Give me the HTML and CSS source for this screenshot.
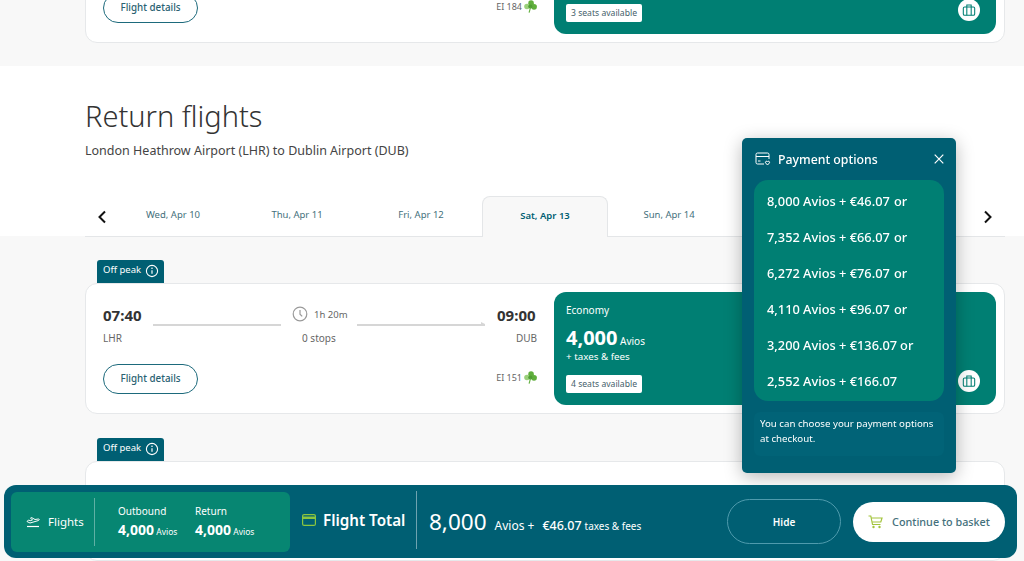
FILE: index.html

```html
<!DOCTYPE html>
<html lang="en">
<head>
  <meta charset="UTF-8" />
  <meta name="viewport" content="width=device-width, initial-scale=1.0"/>
  <title>Return flights</title>
  <link rel="stylesheet" href="styles.css">
</head>
<body>
  <svg class="sprites" width="0" height="0" aria-hidden="true">
    <symbol id="shamrock" viewBox="0 0 14 14">
      <circle cx="7.600" cy="3.400" r="3" fill="#5fae3c"/>
      <circle cx="3.200" cy="7" r="3" fill="#9ad07c"/>
      <circle cx="10.800" cy="7.400" r="3.100" fill="#5fae3c"/>
      <circle cx="6.800" cy="7" r="2.200" fill="#4f9e34"/>
      <path d="M7 8 L5.500 13.500" stroke="#5fae3c" stroke-width="1.200" fill="none"/>
    </symbol>
    <symbol id="bag" viewBox="0 0 16 16">
      <g fill="none" stroke="#007f73" stroke-width="1.200">
        <rect x="1.500" y="4.500" width="13" height="9.500" rx="1.500"/>
        <path d="M5.500 4.500V2.200h5v2.300M5.500 4.500V14M10.500 4.500V14"/>
      </g>
    </symbol>
    <symbol id="info" viewBox="0 0 14 14">
      <circle cx="7" cy="7" r="5.600" fill="none" stroke="#fff" stroke-width="1.100"/>
      <path d="M7 6.200v3.600" stroke="#fff" stroke-width="1.200"/>
      <circle cx="7" cy="4.200" r=".8" fill="#fff"/>
    </symbol>
  </svg>

  <section class="prev-section">
    <div class="card">
      <div class="card-left">
        <div class="details-row">
          <button class="btn-details">Flight details</button>
          <span class="flight-no">EI 184 <svg class="shamrock"><use href="#shamrock"/></svg></span>
        </div>
      </div>
      <div class="fare">
        <div class="fare-foot">
          <span class="seats">3 seats available</span>
          <span class="bag"><svg width="14" height="14"><use href="#bag"/></svg></span>
        </div>
      </div>
    </div>
  </section>

  <section class="heading">
    <h1>Return flights</h1>
    <p>London Heathrow Airport (LHR) to Dublin Airport (DUB)</p>
    <nav class="dates">
      <span class="arrow"><svg width="10" height="14" viewBox="0 0 10 14"><path d="M8 1.500 2.500 7 8 12.500" fill="none" stroke="#111" stroke-width="2"/></svg></span>
      <a class="date">Wed, Apr 10</a>
      <a class="date">Thu, Apr 11</a>
      <a class="date">Fri, Apr 12</a>
      <a class="date active">Sat, Apr 13</a>
      <a class="date">Sun, Apr 14</a>
      <span class="arrow"><svg width="10" height="14" viewBox="0 0 10 14"><path d="M2 1.500 7.500 7 2 12.500" fill="none" stroke="#111" stroke-width="2"/></svg></span>
    </nav>
  </section>

  <section class="results">
    <div class="peak">Off peak <svg width="14" height="14"><use href="#info"/></svg></div>
    <div class="card">
      <div class="card-left">
        <div class="leg">
          <strong class="time">07:40</strong>
          <span class="line"></span>
          <span class="duration">
            <svg width="16" height="16" viewBox="0 0 16 16"><g fill="none" stroke="#9a9a9a" stroke-width="1.200"><circle cx="8" cy="8" r="6.800"/><path d="M8 4v4.200l2.200 2.200"/></g></svg>
            1h 20m
          </span>
          <span class="line line-arrow"></span>
          <strong class="time">09:00</strong>
        </div>
        <div class="airports">
          <span>LHR</span>
          <span>0 stops</span>
          <span>DUB</span>
        </div>
        <div class="details-row">
          <button class="btn-details">Flight details</button>
          <span class="flight-no">EI 151 <svg class="shamrock"><use href="#shamrock"/></svg></span>
        </div>
      </div>
      <div class="fare">
        <div class="fare-name">Economy</div>
        <div class="fare-price"><b>4,000</b> Avios</div>
        <div class="fare-tax">+ taxes &amp; fees</div>
        <div class="fare-foot">
          <span class="seats">4 seats available</span>
          <span class="bag"><svg width="14" height="14"><use href="#bag"/></svg></span>
        </div>
      </div>
    </div>

    <div class="peak peak-next">Off peak <svg width="14" height="14"><use href="#info"/></svg></div>
    <div class="card card-cut">
      <div class="card-left"></div>
      <div class="fare fare-off"></div>
    </div>
  </section>

  <aside class="popup">
    <header class="popup-head">
      <svg width="16" height="14" viewBox="0 0 16 14"><g fill="none" stroke="#fff" stroke-width="1"><path d="M9 12H2.500A1.500 1.500 0 0 1 1 10.500V2.500A1.500 1.500 0 0 1 2.500 1h10A1.500 1.500 0 0 1 14 2.500V7"/><path d="M1 4.500h13M3 9h2.500"/><path d="M12.500 13 10.500 10.800a1.100 1.100 0 0 1 2-1 1.100 1.100 0 0 1 2 1z"/></g></svg>
      <span class="popup-title">Payment options</span>
      <svg class="popup-close" width="10" height="10" viewBox="0 0 10 10"><path d="M.7.7l8.600 8.600M9.300.7.700 9.300" stroke="#fff" stroke-width="1.200"/></svg>
    </header>
    <ul class="options">
      <li><span>8,000 Avios + €46.07</span> or</li>
      <li><span>7,352 Avios + €66.07</span> or</li>
      <li><span>6,272 Avios + €76.07</span> or</li>
      <li><span>4,110 Avios + €96.07</span> or</li>
      <li><span>3,200 Avios + €136.07</span> or</li>
      <li><span>2,552 Avios + €166.07</span></li>
    </ul>
    <p class="popup-note">You can choose your payment options at checkout.</p>
  </aside>

  <footer class="bar">
    <div class="bar-flights">
      <div class="bar-label">
        <svg width="14" height="13" viewBox="0 0 14 13"><g fill="none" stroke="#fff" stroke-width="1"><path d="M1 6.500 4 8l8.500-2.500c1.200-.5 1-1.500-.2-1.500L9 4.500 5.500 2.500 4.500 3l2 2-2.300.7L2.500 5z"/></g><path d="M1 11.500h12" stroke="#fff" stroke-width="1.200"/></svg>
        Flights
      </div>
      <div class="bar-leg">
        <span>Outbound</span>
        <span class="bar-avios"><b>4,000</b> Avios</span>
      </div>
      <div class="bar-leg">
        <span>Return</span>
        <span class="bar-avios"><b>4,000</b> Avios</span>
      </div>
    </div>
    <div class="bar-total">
      <svg width="14" height="12" viewBox="0 0 14 12"><rect x=".6" y=".6" width="12.800" height="10.800" rx="1.500" fill="none" stroke="#8cc63f" stroke-width="1.200"/><rect x="1" y="2.500" width="12" height="2.500" fill="#8cc63f"/></svg>
      Flight Total
    </div>
    <div class="bar-sum">
      <span class="bar-big">8,000</span>
      <span class="bar-mid">Avios +</span>
      <span class="bar-eur">€46.07</span>
      <span class="bar-small">taxes &amp; fees</span>
    </div>
    <button class="btn-hide">Hide</button>
    <button class="btn-basket">
      <svg width="15" height="14" viewBox="0 0 15 14"><g fill="none" stroke="#a3c43c" stroke-width="1.200"><path d="M.5 1h2.300l1.700 8.500h8"/><path d="M3.300 3h10.700l-1.200 4H4.100"/></g><circle cx="5.500" cy="12" r="1.200" fill="#a3c43c"/><circle cx="11.500" cy="12" r="1.200" fill="#a3c43c"/></svg>
      Continue to basket
    </button>
  </footer>
</body>
</html>
```

FILE: styles.css

```css
* {
  box-sizing: border-box;
}
body {
  margin: 0;
  height: 561px;
  overflow: hidden;
  background: #f8f8f8;
  font-family: 'Noto Sans', sans-serif;
  color: #333;
}
.sprites {
  display: block;
}
button {
  font-family: inherit;
  cursor: pointer;
}

/* previous section, scrolled mostly off the top */
.prev-section {
  height: 66px;
  padding: 0 19px 23px 85px;
  display: flex;
  flex-direction: column;
  justify-content: flex-end;
  overflow: hidden;
}
.prev-section .card {
  flex: none;
}

/* heading + date tabs */
.heading {
  background: #fff;
  height: 170px;
  padding: 32px 19px 0 85px;
}
h1 {
  margin: 0;
  font-size: 29px;
  line-height: 36px;
  font-weight: 300;
  color: #333;
}
.heading p {
  margin: 8px 0 0;
  font-size: 12.500px;
  line-height: 18px;
  color: #444;
}
.dates {
  display: flex;
  margin-top: 36px;
  height: 41px;
  border-bottom: 1px solid #e4e6e8;
}
.arrow {
  width: 26px;
  display: flex;
  align-items: center;
  justify-content: center;
  padding: 2px 0 0 8px;
  flex: none;
}
.date {
  width: 124px;
  flex: none;
  display: flex;
  align-items: center;
  justify-content: center;
  font-size: 9.500px;
  color: #44707c;
  padding-bottom: 4px;
}
.date.active {
  height: 41px;
  width: 126px;
  margin: 0 -1px;
  background: #f8f8f8;
  border: 1px solid #e4e6e8;
  border-bottom: none;
  border-radius: 8px 8px 0 0;
  font-weight: 600;
  color: #005f73;
  padding-bottom: 3px;
}
.dates .arrow:last-child {
  margin-left: auto;
  margin-right: 8px;
}

/* flight cards */
.results {
  padding: 24px 19px 0 85px;
}
.peak {
  margin-left: 12px;
  width: 67px;
  height: 23px;
  display: flex;
  align-items: center;
  gap: 4px;
  padding: 0 0 4px 6px;
  background: #005f73;
  border-radius: 3px 3px 0 0;
  color: #fff;
  font-size: 9.500px;
  white-space: nowrap;
}
.peak svg {
  margin-top: 3px;
}
.peak-next {
  margin-top: 24px;
}
.card {
  display: flex;
  justify-content: space-between;
  height: 131px;
  padding: 8px 8px 8px 17px;
  background: #fff;
  border: 1px solid #e6e8ea;
  border-radius: 12px;
}
.card-left {
  width: 434px;
  display: flex;
  flex-direction: column;
  justify-content: flex-end;
}
.fare {
  width: 442px;
  height: 113px;
  flex: none;
  align-self: flex-end;
  padding: 10px 16px 12px 12px;
  background: #007f73;
  border-radius: 12px;
  color: #fff;
  display: flex;
  flex-direction: column;
}
.fare-off {
  height: 60px;
  background: #f3f3f3;
  border: 1px solid #e6e8ea;
  border-radius: 4px;
}
.card-cut {
  height: 100px;
}
.leg {
  display: flex;
  align-items: center;
  height: 20px;
}
.time {
  font-size: 15px;
  font-weight: 700;
  width: 40px;
  flex: none;
}
.line {
  height: 1.500px;
  background: #d6d6d6;
  width: 128px;
  margin: 0 0 0 10px;
  position: relative;
  top: 10px;
}
.line-arrow {
  margin: 0 12px 0 0;
}
.line-arrow::after {
  content: "";
  position: absolute;
  right: 0;
  top: -2px;
  border-left: 4px solid #d6d6d6;
  border-top: 2.500px solid transparent;
  border-bottom: 2.500px solid transparent;
}
.duration {
  width: 76px;
  flex: none;
  display: flex;
  align-items: center;
  gap: 6px;
  font-size: 9.500px;
  color: #666;
  padding-left: 11px;
  margin-top: -2px;
  white-space: nowrap;
}
.airports {
  display: flex;
  justify-content: space-between;
  margin-top: 6px;
  font-size: 10px;
  line-height: 14px;
  color: #666;
}
.details-row {
  display: flex;
  justify-content: space-between;
  align-items: center;
  margin-top: 19px;
  margin-bottom: 11px;
}
.btn-details {
  width: 95px;
  height: 30px;
  padding: 0 0 2px;
  background: #fff;
  border: 1px solid #1d6a7c;
  border-radius: 15px;
  color: #2a6272;
  font-size: 9.800px;
  font-weight: 500;
}
.flight-no {
  display: flex;
  align-items: center;
  gap: 2px;
  font-size: 9px;
  color: #666;
  margin-top: -3px;
}
.shamrock {
  width: 13px;
  height: 13px;
}
.fare-name {
  font-size: 10px;
  line-height: 16px;
}
.fare-price {
  margin-top: 8px;
  font-size: 10px;
  line-height: 24px;
}
.fare-price b {
  font-size: 20px;
  font-weight: 700;
}
.fare-tax {
  font-size: 9.800px;
  line-height: 12px;
  margin-top: -2px;
}
.fare-foot {
  margin-top: auto;
  display: flex;
  justify-content: space-between;
  align-items: flex-end;
}
.seats {
  background: #fff;
  color: #44606a;
  font-size: 8.600px;
  line-height: 18px;
  height: 18px;
  padding: 0 5px;
  border-radius: 2px;
}
.bag {
  width: 22px;
  height: 22px;
  border-radius: 50%;
  background: #fff;
  display: flex;
  align-items: center;
  justify-content: center;
  margin-bottom: 1px;
}

/* payment popup */
.popup {
  position: fixed;
  left: 742px;
  top: 138px;
  width: 214px;
  height: 335px;
  padding: 0 12px;
  background: #005f73;
  border-radius: 5px;
  box-shadow: 0 4px 18px rgba(0, 0, 0, 0.28);
  color: #fff;
}
.popup-head {
  height: 42px;
  display: flex;
  align-items: center;
  gap: 7px;
  padding: 0 0 0 1px;
}
.popup-title {
  font-size: 12.300px;
  font-weight: 500;
}
.popup-close {
  margin-left: auto;
}
.options {
  list-style: none;
  margin: 0;
  padding: 3px 13px 2px;
  background: #007f73;
  border-radius: 14px;
}
.options li {
  display: flex;
  height: 36px;
  align-items: center;
  font-size: 12.800px;
  font-weight: 500;
}
.options span {
  min-width: 124px;
  margin-right: 3px;
  flex: none;
  white-space: nowrap;
}
.popup-note {
  margin: 11px 0 0;
  padding: 4px 4px 4px 6px;
  height: 44px;
  background: #016377;
  border-radius: 6px;
  font-size: 9.700px;
  line-height: 15px;
}

/* sticky basket bar */
.bar {
  position: fixed;
  left: 4px;
  top: 485px;
  width: 1013px;
  height: 73px;
  padding: 7px 12px 7px 7px;
  display: flex;
  align-items: center;
  background: #005f73;
  border-radius: 12px;
  color: #fff;
}
.bar-flights {
  width: 279px;
  height: 60px;
  flex: none;
  display: flex;
  align-items: center;
  background: #078672;
  border-radius: 6px;
}
.bar-label {
  width: 84px;
  height: 48px;
  display: flex;
  align-items: center;
  gap: 8px;
  padding-left: 15px;
  border-right: 1px solid #5fb0a4;
  font-size: 11.500px;
}
.bar-leg {
  display: flex;
  flex-direction: column;
  gap: 2px;
  margin-left: 23px;
  width: 54px;
  font-size: 10px;
  white-space: nowrap;
}
.bar-avios {
  font-size: 8.500px;
}
.bar-avios b {
  font-size: 14px;
}
.bar-total {
  display: flex;
  align-items: center;
  gap: 7px;
  margin-left: 12px;
  width: 115px;
  height: 58px;
  font-size: 15.200px;
  font-weight: 600;
  white-space: nowrap;
  border-right: 1px solid #6ea3b0;
  margin-top: -4px;
}
.bar-sum {
  display: flex;
  align-items: baseline;
  margin-left: 12px;
  white-space: nowrap;
}
.bar-big {
  font-size: 22.500px;
  margin-right: 8px;
}
.bar-mid {
  font-size: 12px;
  margin-right: 8px;
}
.bar-eur {
  font-size: 12.500px;
  font-weight: 500;
  margin-right: 3px;
}
.bar-small {
  font-size: 10px;
}
.btn-hide {
  margin-left: auto;
  width: 114px;
  height: 45px;
  background: transparent;
  border: 1px solid #4f9bad;
  border-radius: 23px;
  color: #fff;
  font-size: 10px;
  font-weight: 600;
}
.btn-basket {
  margin-left: 12px;
  width: 152px;
  height: 40px;
  display: flex;
  align-items: center;
  justify-content: center;
  gap: 9px;
  background: #fff;
  border: none;
  border-radius: 20px;
  color: #44707c;
  font-size: 10.800px;
  font-weight: 500;
}
```
